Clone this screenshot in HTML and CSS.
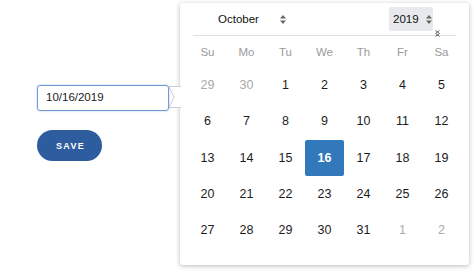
FILE: index.html
```html
<!DOCTYPE html>
<html>
<head>
<meta charset="utf-8">
<link rel="stylesheet" href="styles.css">
</head>
<body>
<div class="page">
  <div class="form">
    <div class="input">10/16/2019</div>
    <button class="save">SAVE</button>
  </div>
</div>
<div class="popup">
  <svg class="pointer" width="12" height="22" viewBox="0 0 12 22">
    <polygon points="0,0.5 12,0.5 12,21.5 0,21.5 5,11" fill="#fff"/>
    <polyline points="12,0.5 0,0.5 5,11 0,21.5 12,21.5" fill="none" stroke="#c9cdd2" stroke-width="1"/>
  </svg>
  <div class="head">
    <div class="sel month">October
      <svg class="updown" width="6" height="9" viewBox="0 0 6 9"><path d="M3 0 L6 3.5 L0 3.5 Z M3 9 L6 5.5 L0 5.5 Z" fill="#666"/></svg>
    </div>
    <div class="sel year">2019
      <svg class="updown" width="6" height="9" viewBox="0 0 6 9"><path d="M3 0 L6 3.5 L0 3.5 Z M3 9 L6 5.5 L0 5.5 Z" fill="#666"/></svg>
      <svg class="xmark" width="5" height="7" viewBox="0 0 5 7"><path d="M0.5 0.5 L4.5 3.5 M4.5 0.5 L0.5 3.5 M0.5 3.5 L4.5 6.5 M4.5 3.5 L0.5 6.5" stroke="#555" stroke-width="0.9" fill="none"/></svg>
    </div>
  </div>
  <div class="grid dow">
    <span>Su</span><span>Mo</span><span>Tu</span><span>We</span><span>Th</span><span>Fr</span><span>Sa</span>
  </div>
  <div class="grid days">
    <span class="off">29</span><span class="off">30</span><span>1</span><span>2</span><span>3</span><span>4</span><span>5</span>
    <span>6</span><span>7</span><span>8</span><span>9</span><span>10</span><span>11</span><span>12</span>
    <span>13</span><span>14</span><span>15</span><span class="sel-day">16</span><span>17</span><span>18</span><span>19</span>
    <span>20</span><span>21</span><span>22</span><span>23</span><span>24</span><span>25</span><span>26</span>
    <span>27</span><span>28</span><span>29</span><span>30</span><span>31</span><span class="off">1</span><span class="off">2</span>
  </div>
</div>
</body>
</html>
```
FILE: styles.css
```css
html, body {
  margin: 0;
  padding: 0;
  background: #fff;
  font-family: "Liberation Sans", Arial, sans-serif;
  color: #222;
}
.page {
  width: 474px;
  height: 272px;
  position: relative;
}
.form {
  padding: 85px 0 0 37px;
  display: flex;
  flex-direction: column;
  align-items: flex-start;
}
.input {
  box-sizing: border-box;
  width: 132px;
  height: 26px;
  border: 1.5px solid #6f9bd0;
  border-radius: 3px;
  padding-left: 8px;
  font-size: 11.5px;
  line-height: 23px;
  color: #1a1a1a;
  box-shadow: 0 0 2px rgba(80,130,200,0.5);
}
.save {
  margin-top: 19px;
  width: 65px;
  height: 31px;
  border: none;
  border-radius: 16px;
  background: #2d5c9f;
  color: #fff;
  font-family: "Liberation Sans", Arial, sans-serif;
  font-weight: bold;
  font-size: 9px;
  letter-spacing: 1.3px;
  padding: 0 0 0 2px;
}
.popup {
  position: absolute;
  left: 180px;
  top: 3px;
  width: 289px;
  height: 262px;
  background: #fff;
  border-radius: 3px;
  box-shadow: 0 1px 5px rgba(0,0,0,0.28);
  box-sizing: border-box;
}
.pointer {
  position: absolute;
  left: -11px;
  top: 83px;
}
.head {
  position: relative;
  height: 32px;
  margin: 0 13px;
  border-bottom: 1px solid #dcdfe3;
  display: flex;
  align-items: flex-start;
  font-size: 11.5px;
  color: #111;
}
.sel {
  display: flex;
  align-items: center;
  height: 24px;
  margin-top: 4px;
}
.month {
  margin-left: 25px;
}
.month .updown {
  margin-left: 21px;
}
.year {
  margin-left: auto;
  margin-right: 23px;
  width: 44px;
  box-sizing: border-box;
  padding-left: 4px;
  background: #e7e9ec;
  border-radius: 2px;
  position: relative;
}
.year .updown {
  margin-left: 7px;
}
.xmark {
  position: absolute;
  left: 46px;
  top: 23px;
}
.grid {
  display: grid;
  grid-template-columns: repeat(7, 39px);
  margin: 0 8px;
}
.grid span {
  display: flex;
  align-items: center;
  justify-content: center;
}
.dow {
  height: 30px;
  padding-top: 1px;
  font-size: 11.5px;
  color: #9a9a9a;
}
.days {
  font-size: 12.5px;
  grid-auto-rows: 36.3px;
  color: #1c1c1c;
}
.days .off {
  color: #aaa;
}
.days .sel-day {
  background: #3179bb;
  color: #fff;
  font-weight: bold;
  border-radius: 2px;
}
```
